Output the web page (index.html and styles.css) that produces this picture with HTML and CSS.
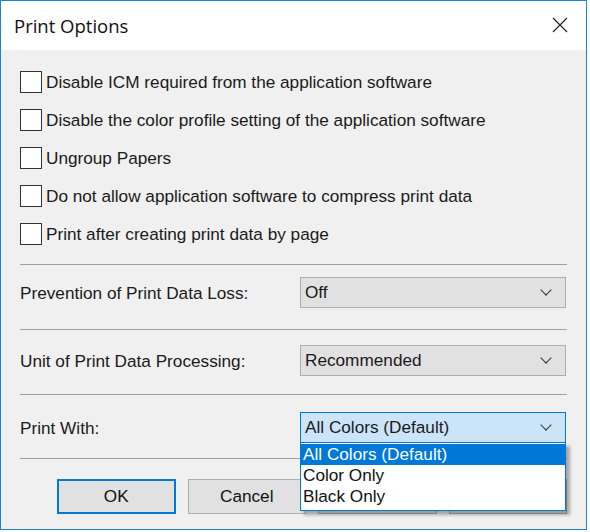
FILE: index.html
```html
<!DOCTYPE html>
<html lang="en">
<head>
    <meta charset="UTF-8">
    <title>Print Options</title>
    <link rel="stylesheet" href="styles.css">
</head>
<body>
    <div class="dialog">
        <div class="title-bar">
            <span class="title">Print Options</span>
            <svg class="close" width="16" height="16" viewBox="0 0 16 16">
                <path d="M1 1 L15 15 M15 1 L1 15" stroke="#222" stroke-width="1.2" fill="none"/>
            </svg>
        </div>

        <div class="content">
            <div class="checks">
                <label class="check"><span class="box"></span>Disable ICM required from the application software</label>
                <label class="check"><span class="box"></span>Disable the color profile setting of the application software</label>
                <label class="check"><span class="box"></span>Ungroup Papers</label>
                <label class="check"><span class="box"></span>Do not allow application software to compress print data</label>
                <label class="check"><span class="box"></span>Print after creating print data by page</label>
            </div>

            <div class="row row-1">
                <span class="label">Prevention of Print Data Loss:</span>
                <div class="select">Off<span class="chevron"></span></div>
            </div>

            <div class="row row-2">
                <span class="label">Unit of Print Data Processing:</span>
                <div class="select">Recommended<span class="chevron"></span></div>
            </div>

            <div class="row row-3">
                <span class="label">Print With:</span>
                <div class="select-wrap">
                    <div class="select open">All Colors (Default)<span class="chevron"></span></div>
                    <ul class="dropdown">
                        <li class="active">All Colors (Default)</li>
                        <li>Color Only</li>
                        <li>Black Only</li>
                    </ul>
                </div>
            </div>

            <div class="buttons">
                <button class="btn btn-default">OK</button>
                <button class="btn">Cancel</button>
                <!-- these two sit under the open list -->
                <button class="btn" aria-label="Apply"></button>
                <button class="btn" aria-label="Help"></button>
            </div>
        </div>
    </div>
</body>
</html>
```

FILE: styles.css
```css
body {
    margin: 0;
    background-color: #ffffff;
    font-family: 'Liberation Sans', Arial, sans-serif;
    color: #1a1a1a;
}

.dialog {
    width: 585px;
    height: 528px;
    border: 1px solid #1883d7;
    background-color: #f0f0f0;
    display: flex;
    flex-direction: column;
}

.title-bar {
    height: 49px;
    background-color: #ffffff;
    display: flex;
    align-items: center;
    justify-content: space-between;
    padding: 0 18px 0 13px;
}

.title {
    font-family: 'Open Sans', 'Noto Sans', sans-serif;
    font-size: 18.5px;
    color: #111;
}

.close {
    margin-top: -1px;
}

.content {
    padding: 21px 19px 0 18px;
    position: relative;
}

.checks {
    display: flex;
    flex-direction: column;
    gap: 16px;
    padding-bottom: 19px;
    margin-left: 1px;
    border-bottom: 1px solid #a0a0a0;
}

.check {
    display: flex;
    align-items: center;
    font-size: 17.2px;
    height: 22px;
}

.box {
    width: 20px;
    height: 20px;
    border: 1px solid #333333;
    background-color: #ffffff;
    margin-right: 4px;
}

.row {
    display: flex;
    justify-content: space-between;
    align-items: flex-start;
    margin-left: 1px;
    border-bottom: 1px solid #a0a0a0;
    font-size: 17.2px;
}

.row-1 {
    padding-top: 12px;
    height: 52px;
}

.row-2 {
    padding-top: 15px;
    height: 49px;
}

.row-3 {
    padding-top: 17px;
    height: 46px;
}

.row .label {
    margin-top: 6px;
}

.select {
    width: 260px;
    height: 29px;
    border: 1px solid #adadad;
    background-color: #e1e1e1;
    display: flex;
    align-items: center;
    justify-content: space-between;
    padding-left: 4px;
    margin-right: 1px;
}

.select.open {
    background-color: #cce4f7;
    border-color: #0078d7;
}

.chevron {
    width: 7px;
    height: 7px;
    border-right: 1.3px solid #333;
    border-bottom: 1.3px solid #333;
    transform: rotate(45deg);
    margin: -5px 15px 0 0;
}

.select-wrap {
    position: relative;
}

.dropdown {
    position: absolute;
    top: 30px;
    left: 0;
    width: 264px;
    margin: 0;
    padding: 1px 0 3px 0;
    list-style: none;
    background-color: #ffffff;
    border: 1px solid #0078d7;
    box-shadow: 4px 4px 3px rgba(0, 0, 0, 0.3);
    z-index: 2;
}

.dropdown li {
    height: 21px;
    line-height: 21px;
    padding-left: 2px;
    font-size: 17.2px;
    color: #111;
}

.dropdown li.active {
    background-color: #0078d7;
    color: #ffffff;
}

.buttons {
    display: flex;
    gap: 12px;
    padding: 20px 0 0 38px;
}

.btn {
    width: 120px;
    height: 35px;
    border: 1px solid #adadad;
    background-color: #e1e1e1;
    font-family: 'Liberation Sans', Arial, sans-serif;
    font-size: 17.2px;
    color: #111;
    padding: 0;
}

.btn-default {
    border: 2px solid #0078d7;
}
```
